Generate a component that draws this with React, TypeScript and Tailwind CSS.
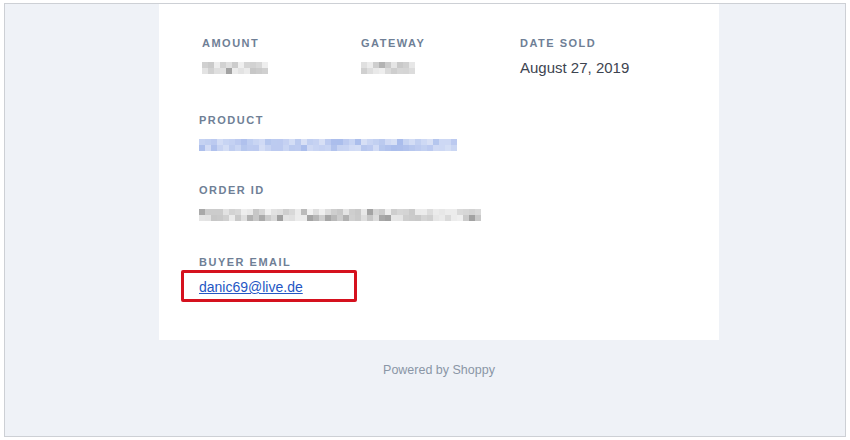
import React from "react";

function rng(seed: number) {
  let s = seed;
  return () => {
    s = (s * 9301 + 49297) % 233280;
    return s / 233280;
  };
}

function Mosaic({ width, seed, tone }: { width: number; seed: number; tone: "gray" | "blue" }) {
  const r = rng(seed);
  const cols = Math.round(width / 6);
  const rows = 2;
  const cells: React.ReactNode[] = [];
  for (let y = 0; y < rows; y++) {
    for (let x = 0; x < cols; x++) {
      const v = r();
      let color: string;
      if (tone === "gray") {
        const l = v < 0.15 ? 150 + v * 200 : 185 + v * 55;
        const c = Math.round(Math.min(240, l));
        color = `rgb(${c},${c},${c})`;
      } else {
        const t = v < 0.15 ? 0.55 : 0.25 + v * 0.45;
        const rr = Math.round(255 - t * (255 - 120));
        const gg = Math.round(255 - t * (255 - 150));
        const bb = Math.round(255 - t * (255 - 225));
        color = `rgb(${rr},${gg},${bb})`;
      }
      cells.push(<div key={`${x}-${y}`} style={{ backgroundColor: color }} className="h-[6px] w-[6px]" />);
    }
  }
  return (
    <div className="flex h-[20px] items-center">
      <div className="grid opacity-90 blur-[0.4px]" style={{ gridTemplateColumns: `repeat(${cols}, 6px)` }}>
        {cells}
      </div>
    </div>
  );
}

function Label({ children }: { children: React.ReactNode }) {
  return (
    <div className="text-[11px] font-bold uppercase leading-[14px] tracking-[1.5px] text-[#6f7f96]">{children}</div>
  );
}

export default function App() {
  return (
    <div className="h-[440px] w-[850px] bg-white pl-[4px] pt-[3px]" style={{ fontFamily: '"Liberation Sans", Arial, sans-serif' }}>
      <div className="flex h-[434px] w-[842px] flex-col border border-[#cdd0d5] bg-[#eff2f7] pl-[154px]">
        <div className="relative w-[560px] bg-white pb-[43px] pl-[40px] pt-[32px]">
          <div className="flex pl-[3px]">
            <div className="w-[159px]">
              <Label>Amount</Label>
              <div className="mt-[8px]">
                <Mosaic width={66} seed={3} tone="gray" />
              </div>
            </div>
            <div className="w-[159px]">
              <Label>Gateway</Label>
              <div className="mt-[8px]">
                <Mosaic width={54} seed={11} tone="gray" />
              </div>
            </div>
            <div>
              <Label>Date Sold</Label>
              <div className="mt-[8px] text-[15px] leading-[20px] text-[#3d4450]">August 27, 2019</div>
            </div>
          </div>

          <div className="mt-[35px]">
            <Label>Product</Label>
            <div className="mt-[8px]">
              <Mosaic width={258} seed={7} tone="blue" />
            </div>
          </div>

          <div className="mt-[28px]">
            <Label>Order ID</Label>
            <div className="mt-[8px]">
              <Mosaic width={282} seed={21} tone="gray" />
            </div>
          </div>

          <div className="mt-[30px]">
            <Label>Buyer Email</Label>
            <div className="mt-[8px] text-[14px] leading-[20px]">
              <a href="#" className="text-[#2456c4] underline">danic69@live.de</a>
            </div>
          </div>

          <div className="absolute left-[22px] top-[266px] h-[32px] w-[176px] rounded-[2px] border-[3px] border-[#d5111e]" />
        </div>
        <div className="mt-[22px] w-[560px] text-center text-[12.5px] leading-[16px] text-[#8a96a6]">Powered by Shoppy</div>
      </div>
    </div>
  );
}
